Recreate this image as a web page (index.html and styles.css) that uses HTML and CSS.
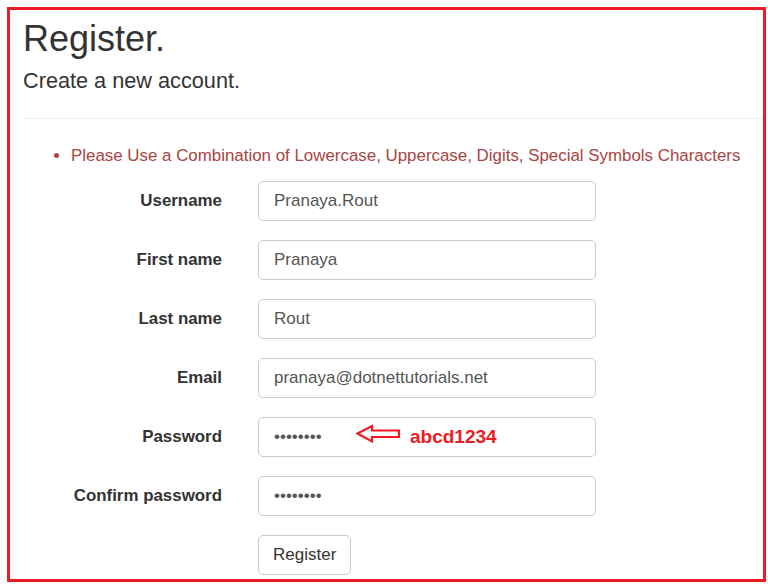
FILE: index.html
```html
<!DOCTYPE html>
<html lang="en">
<head>
<meta charset="utf-8">
<title>Register</title>
<link rel="stylesheet" href="styles.css">
</head>
<body>
<div class="frame">
  <h2 class="title">Register.</h2>
  <h4 class="subtitle">Create a new account.</h4>
  <hr class="rule">
  <ul class="errors">
    <li>Please Use a Combination of Lowercase, Uppercase, Digits, Special Symbols Characters</li>
  </ul>
  <form class="form">
    <label class="label">Username</label>
    <div class="field"><input class="control" type="text" value="Pranaya.Rout"></div>

    <label class="label">First name</label>
    <div class="field"><input class="control" type="text" value="Pranaya"></div>

    <label class="label">Last name</label>
    <div class="field"><input class="control" type="text" value="Rout"></div>

    <label class="label">Email</label>
    <div class="field"><input class="control" type="text" value="pranaya@dotnettutorials.net"></div>

    <label class="label">Password</label>
    <div class="field annotated">
      <input class="control dots" type="text" value="••••••••">
      <svg class="arrow" width="46" height="20" viewBox="0 0 46 20" aria-hidden="true">
        <polygon points="1.5,9.5 16,2 16,6.5 43,6.5 43,13 16,13 16,17.5" fill="none" stroke="#ed1c24" stroke-width="2.2" stroke-linejoin="miter"/>
      </svg>
      <span class="note">abcd1234</span>
    </div>

    <label class="label">Confirm password</label>
    <div class="field"><input class="control dots" type="text" value="••••••••"></div>

    <div class="spacer"></div>
    <div class="field"><button class="btn" type="button">Register</button></div>
  </form>
</div>
</body>
</html>
```
FILE: styles.css
```css
* { box-sizing: border-box; }

html, body {
  margin: 0;
  padding: 0;
  background: #fff;
}

body {
  font-family: "Liberation Sans", Arial, sans-serif;
  color: #333;
  font-size: 17px;
  line-height: 1.42857;
}

.frame {
  margin: 7px 0 0 7px;
  width: 759px;
  height: 575px;
  border: 3px solid #ed1c24;
  padding: 0 0 0 13px;
  overflow: hidden;
}

.title {
  margin: 10.4px 0 0;
  font-size: 36px;
  line-height: 38.5px;
  font-weight: 400;
  color: #333;
}

.subtitle {
  margin: 10px 0 0;
  font-size: 21.7px;
  line-height: 23.1px;
  font-weight: 400;
  color: #333;
}

.rule {
  margin: 26px 0 25px;
  border: 0;
  border-top: 1px solid #eee;
  height: 0;
}

.errors {
  margin: 0;
  padding-left: 48px;
  color: #a94442;
  font-size: 16.9px;
  line-height: 23.3px;
}

.form {
  margin-top: 13.5px;
  display: grid;
  grid-template-columns: 199px 338px;
  column-gap: 36px;
  row-gap: 19px;
  align-items: start;
}

.label {
  text-align: right;
  font-weight: 700;
  font-size: 16.9px;
  padding-top: 8.5px;
  line-height: 23.3px;
  color: #333;
}

.field { height: 40px; }

.annotated { position: relative; }

.control {
  display: block;
  width: 100%;
  height: 40px;
  padding: 0 15px;
  border: 1px solid #ccc;
  border-radius: 5px;
  font-family: "Liberation Sans", Arial, sans-serif;
  font-size: 17px;
  color: #555;
  background: #fff;
  outline: none;
}

.dots {
  font-size: 17px;
  color: #555;
}

.arrow {
  position: absolute;
  left: 98px;
  top: 7px;
}

.note {
  position: absolute;
  left: 152px;
  top: 10px;
  font-weight: 700;
  font-size: 19px;
  line-height: 20px;
  color: #ed1c24;
}

.btn {
  height: 40px;
  padding: 0 14px;
  border: 1px solid #ccc;
  border-radius: 5px;
  background: #fff;
  color: #333;
  font-family: "Liberation Sans", Arial, sans-serif;
  font-size: 17px;
}
```
